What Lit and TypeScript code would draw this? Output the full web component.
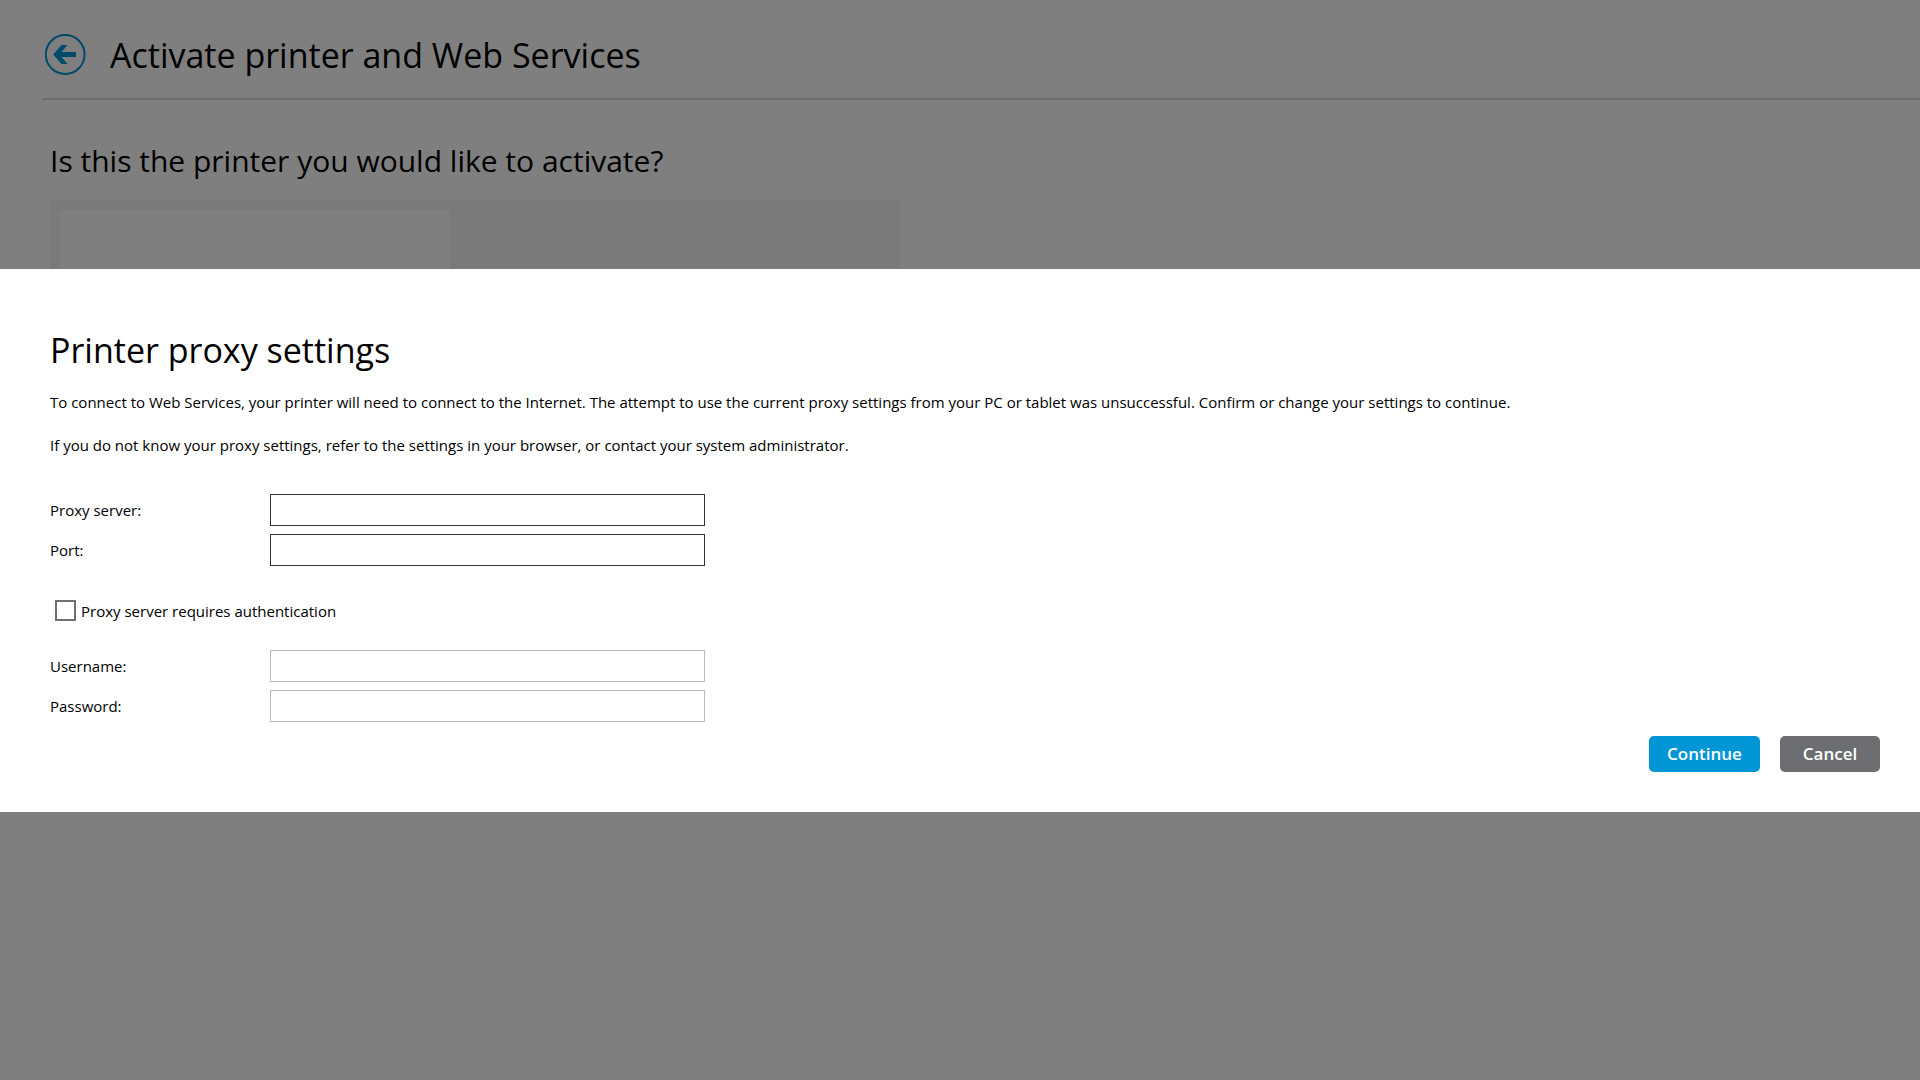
import { LitElement, html, css } from "lit";
import { customElement, state } from "lit/decorators.js";

@customElement("app-root")
export class AppRoot extends LitElement {
  @state() private authRequired = false;

  static styles = css`
    :host {
      display: block;
      min-height: 100vh;
      background: #ffffff;
      color: #000000;
      font-family: "Segoe UI", "Open Sans", "Noto Sans", sans-serif;
      font-size: 15px;
      line-height: 24px;
    }
    * {
      box-sizing: border-box;
    }
    h1,
    h2,
    p {
      margin: 0;
      font-weight: 400;
    }
    .header {
      display: flex;
      align-items: center;
      gap: 23px;
      height: 100px;
      margin-left: 42px;
      padding: 12px 3px 0;
      border-bottom: 2px solid #d8d8d8;
    }
    .back {
      display: block;
      width: 42px;
      height: 42px;
      padding: 0;
      border: 0;
      background: none;
    }
    .back svg {
      display: block;
    }
    .title {
      font-size: 34px;
      line-height: 48px;
    }
    .content {
      padding: 39px 50px 0;
    }
    .question {
      font-size: 30px;
      line-height: 44px;
    }
    .printers {
      display: flex;
      max-width: 850px;
      height: 360px;
      margin-top: 17px;
      padding: 10px;
      background: #f4f4f4;
    }
    .printer {
      flex: 0 1 390px;
      background: #ffffff;
    }
    .overlay {
      position: fixed;
      inset: 0;
      display: flex;
      align-items: center;
      background: rgba(0, 0, 0, 0.5);
    }
    .dialog {
      flex: 1;
      padding: 57px 40px 40px 50px;
      background: #ffffff;
    }
    .intro {
      margin-top: 16px;
    }
    .intro p + p {
      margin-top: 19px;
    }
    .fields {
      display: grid;
      grid-template-columns: 220px minmax(0, 435px);
      gap: 8px 0;
      align-items: center;
    }
    .proxy {
      margin-top: 37px;
    }
    .text {
      width: 100%;
      height: 32px;
      padding: 0 8px;
      border: 1px solid #333333;
      border-radius: 0;
      background: #ffffff;
      font: inherit;
    }
    .text:disabled {
      border-color: #bbbbbb;
    }
    .auth {
      display: flex;
      align-items: center;
      gap: 5px;
      margin: 33px 0 27px 5px;
    }
    .check {
      appearance: none;
      width: 21px;
      height: 21px;
      margin: 0;
      border: 2px solid #707070;
      background: #ffffff;
    }
    .check:checked {
      background: #0096d6;
    }
    .actions {
      display: flex;
      justify-content: flex-end;
      gap: 20px;
      margin-top: 14px;
    }
    .button {
      height: 36px;
      padding: 0 18px;
      border: 0;
      border-radius: 5px;
      color: #ffffff;
      font: 600 17px/24px "Segoe UI", "Open Sans", "Noto Sans", sans-serif;
    }
    .primary {
      min-width: 111px;
      background: #0096d6;
    }
    .secondary {
      min-width: 100px;
      background: #6d6e71;
    }
  `;

  private toggleAuth(event: Event) {
    this.authRequired = (event.target as HTMLInputElement).checked;
  }

  render() {
    return html`
      <header class="header">
        <button class="back" type="button" aria-label="Back">
          <svg width="42" height="42" viewBox="0 0 42 42" aria-hidden="true">
            <circle cx="20.2" cy="20.5" r="19.4" fill="none" stroke="#0096d6" stroke-width="2" />
            <path d="M8.2 20.5 L16.5 11 H22.5 L16.5 18 H31 V23 H16.5 L22.5 30 H16.5 Z" fill="#0096d6" />
          </svg>
        </button>
        <h1 class="title">Activate printer and Web Services</h1>
      </header>
      <main class="content">
        <h2 class="question">Is this the printer you would like to activate?</h2>
        <div class="printers"><div class="printer"></div></div>
      </main>
      <div class="overlay">
        <section class="dialog" role="dialog" aria-modal="true" aria-labelledby="dialog-title">
          <h2 class="title" id="dialog-title">Printer proxy settings</h2>
          <div class="intro">
            <p>To connect to Web Services, your printer will need to connect to the Internet. The attempt to use the current proxy settings from your PC or tablet was unsuccessful. Confirm or change your settings to continue.</p>
            <p>If you do not know your proxy settings, refer to the settings in your browser, or contact your system administrator.</p>
          </div>
          <form>
            <div class="fields proxy">
              <label for="server">Proxy server:</label>
              <input class="text" id="server" type="text" />
              <label for="port">Port:</label>
              <input class="text" id="port" type="text" inputmode="numeric" />
            </div>
            <div class="auth">
              <input class="check" id="auth" type="checkbox" .checked=${this.authRequired} @change=${this.toggleAuth} />
              <label for="auth">Proxy server requires authentication</label>
            </div>
            <div class="fields">
              <label for="username">Username:</label>
              <input class="text" id="username" type="text" autocomplete="username" ?disabled=${!this.authRequired} />
              <label for="password">Password:</label>
              <input class="text" id="password" type="password" autocomplete="current-password" ?disabled=${!this.authRequired} />
            </div>
            <div class="actions">
              <button class="button primary" type="button">Continue</button>
              <button class="button secondary" type="button">Cancel</button>
            </div>
          </form>
        </section>
      </div>
    `;
  }
}
